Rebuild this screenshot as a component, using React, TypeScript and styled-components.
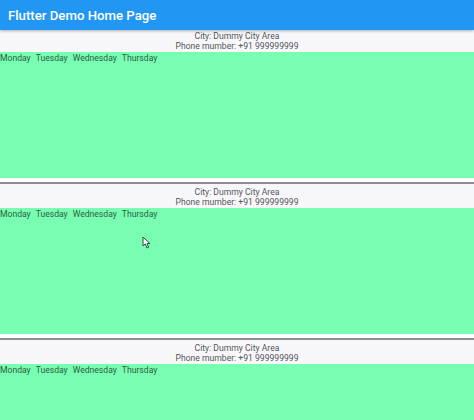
import styled, { createGlobalStyle } from 'styled-components';

const GlobalStyle = createGlobalStyle`
  html, body {
    margin: 0;
    padding: 0;
    background: #ffffff;
    font-family: Roboto, "Liberation Sans", sans-serif;
  }
`;

const Page = styled.div`
  position: relative;
  width: 474px;
  height: 420px;
  overflow: hidden;
  display: flex;
  flex-direction: column;
  background: #ffffff;
`;

const AppBar = styled.header`
  height: 30px;
  flex-shrink: 0;
  display: flex;
  align-items: center;
  padding-left: 8px;
  background: #2196f3;
  box-shadow: 0 1px 3px rgba(0, 0, 0, 0.3);
  position: relative;
  z-index: 2;
`;

const Title = styled.h1`
  margin: 0;
  color: #ffffff;
  font-size: 13.2px;
  font-weight: 500;
`;

const List = styled.div`
  flex: 1;
  overflow: hidden;
`;

// the list is scrolled a few pixels down, so the first card's top is hidden
const Scrolled = styled.div`
  margin-top: -8px;
`;

const Card = styled.section`
  display: flex;
  flex-direction: column;
  padding-top: 4px;
`;

const Divider = styled.div`
  height: 2px;
  background: #8e8e90;
`;

const Header = styled.div`
  height: 24px;
  box-sizing: border-box;
  padding-top: 3px;
  background: #f7f7fa;
  text-align: center;
  color: #555559;
  font-size: 8.6px;
  line-height: 10px;
`;

const Body = styled.div`
  height: 126px;
  background: #78fdb2;
`;

const Days = styled.div`
  display: flex;
  gap: 5px;
  padding-top: 1px;
`;

const Day = styled.span`
  font-size: 8.6px;
  line-height: 10px;
  color: #2c5f42;
`;

const Cursor = styled.svg`
  position: absolute;
  left: 142px;
  top: 236px;
  z-index: 3;
`;

const days = ['Monday', 'Tuesday', 'Wednesday', 'Thursday'];

const App = () => {
  return (
    <>
      <GlobalStyle />
      <Page>
        <AppBar>
          <Title>Flutter Demo Home Page</Title>
        </AppBar>
        <List>
          <Scrolled>
            {[0, 1, 2].map((i) => (
              <Card key={i}>
                <Divider />
                <Header>
                  <div>City: Dummy City Area</div>
                  <div>Phone mumber: +91 999999999</div>
                </Header>
                <Body>
                  <Days>
                    {days.map((d) => (
                      <Day key={d}>{d}</Day>
                    ))}
                  </Days>
                </Body>
              </Card>
            ))}
          </Scrolled>
        </List>
        <Cursor width="9" height="13" viewBox="0 0 9 13">
          <path d="M1 1 L1 10 L3.3 8 L5 12 L6.6 11.3 L5 7.6 L8 7.6 Z" fill="#ffffff" stroke="#2b4a3a" strokeWidth="1" strokeLinejoin="round" />
        </Cursor>
      </Page>
    </>
  );
};

export default App;
